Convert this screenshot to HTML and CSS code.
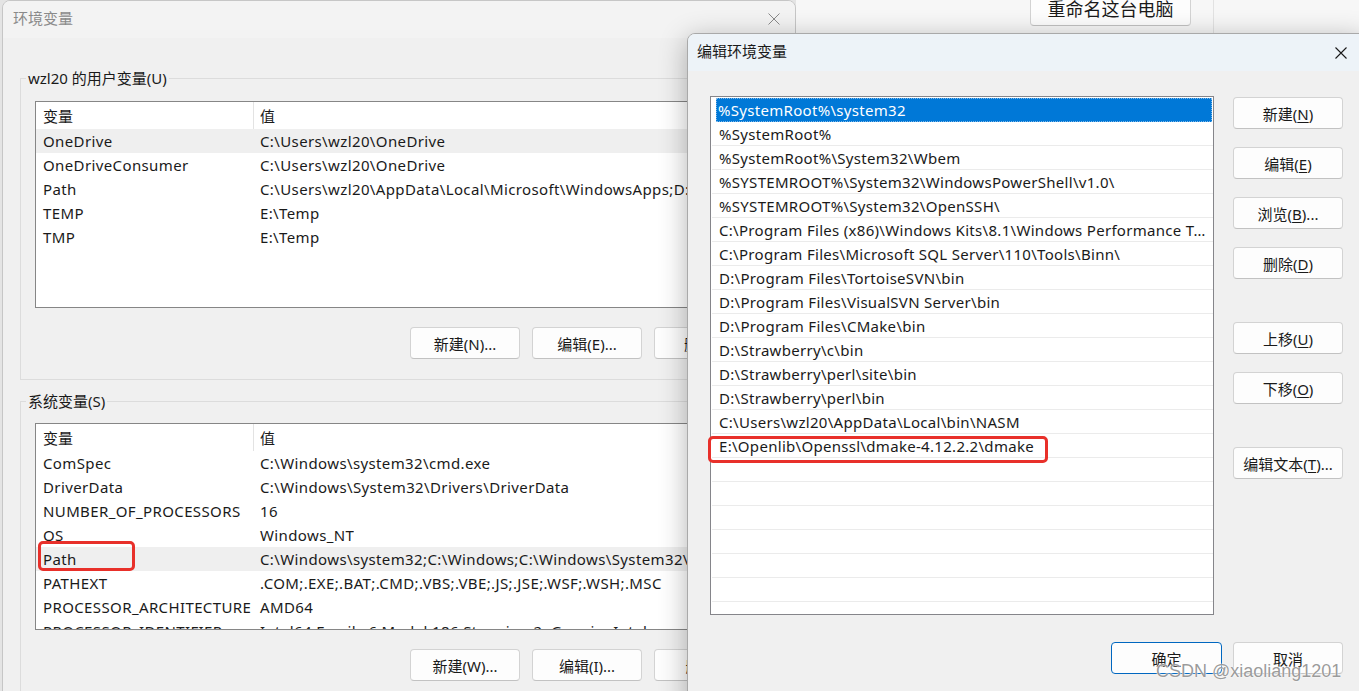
FILE: index.html
```html
<!DOCTYPE html>
<html lang="zh-CN">
<head>
    <meta charset="UTF-8">
    <title>环境变量</title>
    <link rel="stylesheet" href="styles.css">
</head>
<body>
    <!-- window behind both dialogs -->
    <div class="back-window">
        <div class="back-pane">
            <button class="btn rename">重命名这台电脑</button>
        </div>
    </div>

    <!-- 环境变量 -->
    <div class="window env-window">
        <div class="titlebar">
            <span class="title">环境变量</span>
            <svg class="close" width="12" height="12" viewBox="0 0 12 12"><path d="M0.5 0.5L11.5 11.5M11.5 0.5L0.5 11.5" stroke="currentColor" stroke-width="1"/></svg>
        </div>
        <div class="env-body">
            <fieldset class="group">
                <legend>wzl20 的用户变量(U)</legend>
                <div class="var-list">
                    <div class="var-head"><span class="col-name">变量</span><span class="col-value">值</span></div>
                    <div class="var-row selected"><span class="col-name">OneDrive</span><span class="col-value">C:\Users\wzl20\OneDrive</span></div>
                    <div class="var-row"><span class="col-name">OneDriveConsumer</span><span class="col-value">C:\Users\wzl20\OneDrive</span></div>
                    <div class="var-row"><span class="col-name">Path</span><span class="col-value">C:\Users\wzl20\AppData\Local\Microsoft\WindowsApps;D:\Program Files\Microsoft VS Code\bin</span></div>
                    <div class="var-row"><span class="col-name">TEMP</span><span class="col-value">E:\Temp</span></div>
                    <div class="var-row"><span class="col-name">TMP</span><span class="col-value">E:\Temp</span></div>
                </div>
                <div class="btn-row">
                    <button class="btn">新建(N)...</button>
                    <button class="btn">编辑(E)...</button>
                    <button class="btn">删除(D)</button>
                </div>
            </fieldset>

            <fieldset class="group system">
                <legend>系统变量(S)</legend>
                <div class="var-list">
                    <div class="var-head"><span class="col-name">变量</span><span class="col-value">值</span></div>
                    <div class="var-row"><span class="col-name">ComSpec</span><span class="col-value">C:\Windows\system32\cmd.exe</span></div>
                    <div class="var-row"><span class="col-name">DriverData</span><span class="col-value">C:\Windows\System32\Drivers\DriverData</span></div>
                    <div class="var-row"><span class="col-name">NUMBER_OF_PROCESSORS</span><span class="col-value">16</span></div>
                    <div class="var-row"><span class="col-name">OS</span><span class="col-value">Windows_NT</span></div>
                    <div class="var-row selected"><span class="col-name">Path</span><span class="col-value">C:\Windows\system32;C:\Windows;C:\Windows\System32\Wbem;C:\Windows\System32\WindowsPowerShell\v1.0\</span></div>
                    <div class="var-row"><span class="col-name">PATHEXT</span><span class="col-value">.COM;.EXE;.BAT;.CMD;.VBS;.VBE;.JS;.JSE;.WSF;.WSH;.MSC</span></div>
                    <div class="var-row"><span class="col-name">PROCESSOR_ARCHITECTURE</span><span class="col-value">AMD64</span></div>
                    <div class="var-row"><span class="col-name">PROCESSOR_IDENTIFIER</span><span class="col-value">Intel64 Family 6 Model 186 Stepping 2, GenuineIntel</span></div>
                </div>
                <div class="btn-row">
                    <button class="btn">新建(W)...</button>
                    <button class="btn">编辑(I)...</button>
                    <button class="btn">删除(L)</button>
                </div>
            </fieldset>
        </div>
    </div>

    <!-- 编辑环境变量 -->
    <div class="window edit-window">
        <div class="titlebar">
            <span class="title">编辑环境变量</span>
            <svg class="close" width="12" height="12" viewBox="0 0 12 12"><path d="M0.5 0.5L11.5 11.5M11.5 0.5L0.5 11.5" stroke="currentColor" stroke-width="1.1"/></svg>
        </div>
        <div class="edit-body">
            <div class="edit-main">
                <div class="path-list">
                    <div class="path-item selected">%SystemRoot%\system32</div>
                    <div class="path-item">%SystemRoot%</div>
                    <div class="path-item">%SystemRoot%\System32\Wbem</div>
                    <div class="path-item">%SYSTEMROOT%\System32\WindowsPowerShell\v1.0\</div>
                    <div class="path-item">%SYSTEMROOT%\System32\OpenSSH\</div>
                    <div class="path-item">C:\Program Files (x86)\Windows Kits\8.1\Windows Performance Toolkit\</div>
                    <div class="path-item">C:\Program Files\Microsoft SQL Server\110\Tools\Binn\</div>
                    <div class="path-item">D:\Program Files\TortoiseSVN\bin</div>
                    <div class="path-item">D:\Program Files\VisualSVN Server\bin</div>
                    <div class="path-item">D:\Program Files\CMake\bin</div>
                    <div class="path-item">D:\Strawberry\c\bin</div>
                    <div class="path-item">D:\Strawberry\perl\site\bin</div>
                    <div class="path-item">D:\Strawberry\perl\bin</div>
                    <div class="path-item">C:\Users\wzl20\AppData\Local\bin\NASM</div>
                    <div class="path-item">E:\Openlib\Openssl\dmake-4.12.2.2\dmake</div>
                    <div class="path-item"></div>
                    <div class="path-item"></div>
                    <div class="path-item"></div>
                    <div class="path-item"></div>
                    <div class="path-item"></div>
                    <div class="path-item"></div>
                    <div class="path-item"></div>
                </div>
                <div class="side-buttons">
                    <button class="btn">新建(<u>N</u>)</button>
                    <button class="btn">编辑(<u>E</u>)</button>
                    <button class="btn">浏览(<u>B</u>)...</button>
                    <button class="btn">删除(<u>D</u>)</button>
                    <button class="btn spaced">上移(<u>U</u>)</button>
                    <button class="btn">下移(<u>O</u>)</button>
                    <button class="btn spaced">编辑文本(<u>T</u>)...</button>
                </div>
            </div>
            <div class="edit-footer">
                <button class="btn primary">确定</button>
                <button class="btn">取消</button>
            </div>
        </div>
    </div>

    <!-- annotations drawn over the screenshot -->
    <div class="mark mark-path"></div>
    <div class="mark mark-dmake"></div>
    <div class="watermark">CSDN @xiaoliang1201</div>
</body>
</html>
```

FILE: styles.css
```css
* {
    box-sizing: border-box;
}

body {
    margin: 0;
    width: 1359px;
    height: 691px;
    overflow: hidden;
    position: relative;
    background-color: #e4e4e4;
    font-family: "Noto Sans", "Noto Sans CJK SC", sans-serif;
    font-size: 15px;
    color: #1a1a1a;
}

/* shared button */
.btn {
    height: 32px;
    width: 110px;
    padding: 0;
    font-family: inherit;
    font-size: 15px;
    color: #1a1a1a;
    background-color: #fdfdfd;
    border: 1px solid #d3d3d3;
    border-bottom-color: #c2c2c2;
    border-radius: 4px;
    white-space: nowrap;
}

.btn u {
    text-underline-offset: 2px;
}

/* window in the background */
.back-window {
    position: absolute;
    left: 796px;
    top: 0;
    width: 563px;
    height: 40px;
    background-color: #f7f7f7;
}

.back-pane {
    width: 418px;
    height: 100%;
    padding-left: 234px;
    border-right: 1px solid #e2e2e2;
}

.rename {
    width: 161px;
    height: 34px;
    margin-top: -10px;
    padding-top: 1px;
    font-size: 18px;
    line-height: 20px;
}

/* dialogs */
.window {
    position: absolute;
    display: flex;
    flex-direction: column;
    background-color: #f0f0f0;
    border: 1px solid #c6c6c6;
    border-radius: 8px 8px 0 0;
    overflow: hidden;
}

.titlebar {
    height: 37px;
    flex-shrink: 0;
    display: flex;
    align-items: center;
    justify-content: space-between;
}

.title {
    font-size: 15px;
    line-height: 20px;
    margin-bottom: 3px;
}

.env-window {
    left: 2px;
    top: 0;
    width: 794px;
    height: 720px;
}

.env-window .titlebar {
    padding: 0 15px 0 10px;
    background-color: #f3f3f3;
}

.env-window .title,
.env-window .close {
    color: #8a8a8a;
}

.env-window .close {
    margin-bottom: 1px;
}

.env-body {
    padding: 30px 16px 0 17px;
}

.group {
    margin: 0;
    padding: 13px 14px 20px;
    border: 1px solid #dcdcdc;
    min-width: 0;
}

.group legend {
    margin-left: -9px;
    padding: 0 2px;
    line-height: 20px;
}

.group.system {
    margin-top: 11px;
}

.group.system legend {
    margin-bottom: -1px;
}

.var-list {
    height: 207px;
    background-color: #fff;
    border: 1px solid #868686;
    overflow: hidden;
}

.var-head,
.var-row {
    display: flex;
    white-space: nowrap;
}

.var-head {
    height: 27px;
    line-height: 29px;
}

.var-row {
    height: 24px;
    line-height: 24px;
    letter-spacing: 0.38px;
}

.var-row.selected {
    background-color: #efefef;
}

.col-name {
    width: 217px;
    flex-shrink: 0;
    padding-left: 7px;
    overflow: hidden;
}

.col-value {
    padding-left: 7px;
    overflow: hidden;
}

.var-head .col-value {
    border-left: 1px solid #e3e3e3;
    padding-left: 6px;
}

.btn-row {
    display: flex;
    justify-content: flex-end;
    gap: 12px;
    margin-top: 19px;
}

.edit-window {
    left: 687px;
    top: 33px;
    width: 680px;
    height: 680px;
    border-color: #a9a9a9;
    box-shadow: 0 6px 28px rgba(0, 0, 0, 0.3);
}

.edit-window .titlebar {
    padding: 0 19px 0 9px;
    background-color: #edf3f8;
}

.edit-window .close {
    color: #1a1a1a;
}

.edit-body {
    padding: 25px 23px 0 22px;
}

.edit-main {
    display: flex;
    gap: 19px;
}

.path-list {
    width: 504px;
    height: 519px;
    padding-top: 1px;
    background-color: #fff;
    border: 1px solid #85858a;
    overflow: hidden;
    letter-spacing: 0.3px;
}

.path-item {
    height: 24px;
    line-height: 25px;
    padding-left: 7px;
    margin-left: 1px;
    border-bottom: 1px solid #ebebeb;
    white-space: nowrap;
    overflow: hidden;
    text-overflow: ellipsis;
}

.path-item.selected {
    margin: 0 1px 0 5px;
    padding-left: 2px;
    color: #fff;
    background-color: #0078d7;
    border-bottom-color: #0078d7;
    outline: 1px dotted #7fb8e8;
    outline-offset: -1px;
}

.side-buttons {
    display: flex;
    flex-direction: column;
    gap: 18px;
    padding-top: 1px;
}

.side-buttons .spaced {
    margin-top: 25px;
}

.edit-footer {
    display: flex;
    justify-content: flex-end;
    gap: 11px;
    margin-top: 27px;
}

.btn.primary {
    width: 111px;
    border: 1px solid #0067c0;
}

/* red annotation boxes */
.mark {
    position: absolute;
    border: 3px solid #e8302a;
    border-radius: 5px;
}

.mark-path {
    left: 38px;
    top: 541px;
    width: 97px;
    height: 30px;
}

.mark-dmake {
    left: 708px;
    top: 436px;
    width: 340px;
    height: 27px;
}

.watermark {
    position: absolute;
    left: 1156px;
    top: 659px;
    font-family: "Liberation Sans", sans-serif;
    font-size: 18px;
    line-height: 24px;
    color: rgba(110, 110, 110, 0.7);
    text-shadow: 0 0 1px #fff, 0 0 2px #fff;
    white-space: nowrap;
}
```
